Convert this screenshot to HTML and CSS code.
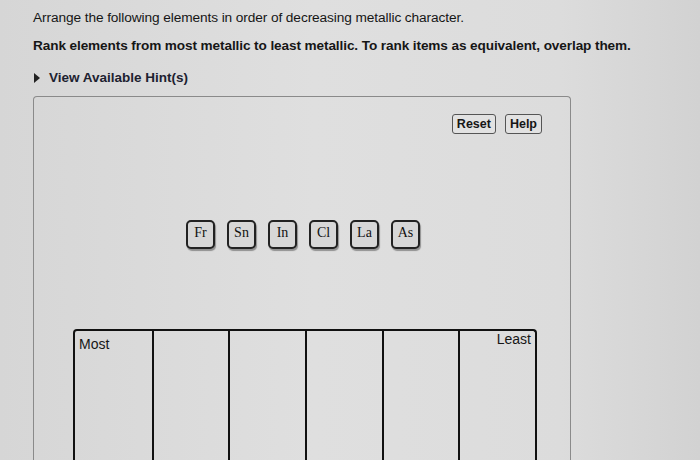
FILE: index.html
```html
<!DOCTYPE html>
<html>
<head>
<meta charset="utf-8">
<link rel="stylesheet" href="styles.css">
</head>
<body>
<div class="page">
  <p class="q">Arrange the following elements in order of decreasing metallic character.</p>
  <p class="inst">Rank elements from most metallic to least metallic. To rank items as equivalent, overlap them.</p>
  <div class="hint"><span class="tri"></span><span>View Available Hint(s)</span></div>
  <div class="panel">
    <div class="tools">
      <button class="btn">Reset</button>
      <button class="btn">Help</button>
    </div>
    <div class="tiles">
      <div class="tile">Fr</div>
      <div class="tile">Sn</div>
      <div class="tile">In</div>
      <div class="tile">Cl</div>
      <div class="tile">La</div>
      <div class="tile">As</div>
    </div>
    <div class="rank">
      <div class="col"><span class="lbl">Most</span></div>
      <div class="col"></div>
      <div class="col"></div>
      <div class="col"></div>
      <div class="col"></div>
      <div class="col right"><span class="lbl">Least</span></div>
    </div>
  </div>
</div>
</body>
</html>
```
FILE: styles.css
```css
html, body {
  margin: 0;
  padding: 0;
  height: 460px;
  overflow: hidden;
}
body {
  background: linear-gradient(90deg, #d6d6d6 0%, #dfdfdf 45%, #dcdcdc 80%, #d2d2d2 100%);
  font-family: "Liberation Sans", Arial, sans-serif;
  color: #161616;
}
.page {
  padding: 10px 0 0 33px;
}
.q {
  margin: 0;
  font-size: 13.7px;
  line-height: 16px;
  letter-spacing: -0.1px;
}
.inst {
  margin: 12px 0 0 0;
  font-size: 13.6px;
  line-height: 16px;
  font-weight: bold;
  letter-spacing: -0.1px;
}
.hint {
  margin-top: 16px;
  display: flex;
  align-items: center;
  gap: 9px;
  font-size: 13.5px;
  line-height: 16px;
  font-weight: bold;
  color: #1d2230;
}
.tri {
  width: 0;
  height: 0;
  border-left: 6px solid #222;
  border-top: 5px solid transparent;
  border-bottom: 5px solid transparent;
  margin-left: 1px;
}
.panel {
  margin-top: 10px;
  width: 538px;
  height: 366px;
  border: 1px solid #8a8a8a;
  border-bottom: none;
  border-radius: 4px 4px 0 0;
  box-sizing: border-box;
}
.tools {
  display: flex;
  justify-content: flex-end;
  gap: 9px;
  padding: 17px 28px 0 0;
}
.btn {
  font-family: "Liberation Sans", Arial, sans-serif;
  font-weight: bold;
  font-size: 12.5px;
  color: #161616;
  background: #e2e2e2;
  border: 1px solid #555;
  border-radius: 3px;
  padding: 0 4px;
  height: 20px;
  line-height: 18px;
}
.tiles {
  display: flex;
  gap: 12px;
  padding: 86px 0 0 152px;
}
.tile {
  width: 25px;
  height: 22px;
  padding-bottom: 3px;
  border: 2px solid #222;
  border-radius: 5px;
  background: #d7d7d7;
  box-shadow: 1px 2px 1px rgba(0,0,0,0.35);
  font-family: "Liberation Serif", "Times New Roman", serif;
  font-size: 14px;
  color: #111;
  display: flex;
  align-items: center;
  justify-content: center;
}
.rank {
  margin: 80px 0 0 39px;
  width: 464px;
  height: 132px;
  display: grid;
  grid-template-columns: repeat(6, 1fr);
  border: 2px solid #111;
  border-bottom: none;
  border-radius: 4px 4px 0 0;
  box-sizing: border-box;
}
.col {
  border-left: 2px solid #111;
  padding: 5px 4px;
  font-size: 14px;
  line-height: 16px;
}
.col:first-child {
  border-left: none;
}
.col.right {
  text-align: right;
  padding-top: 0;
}
```
